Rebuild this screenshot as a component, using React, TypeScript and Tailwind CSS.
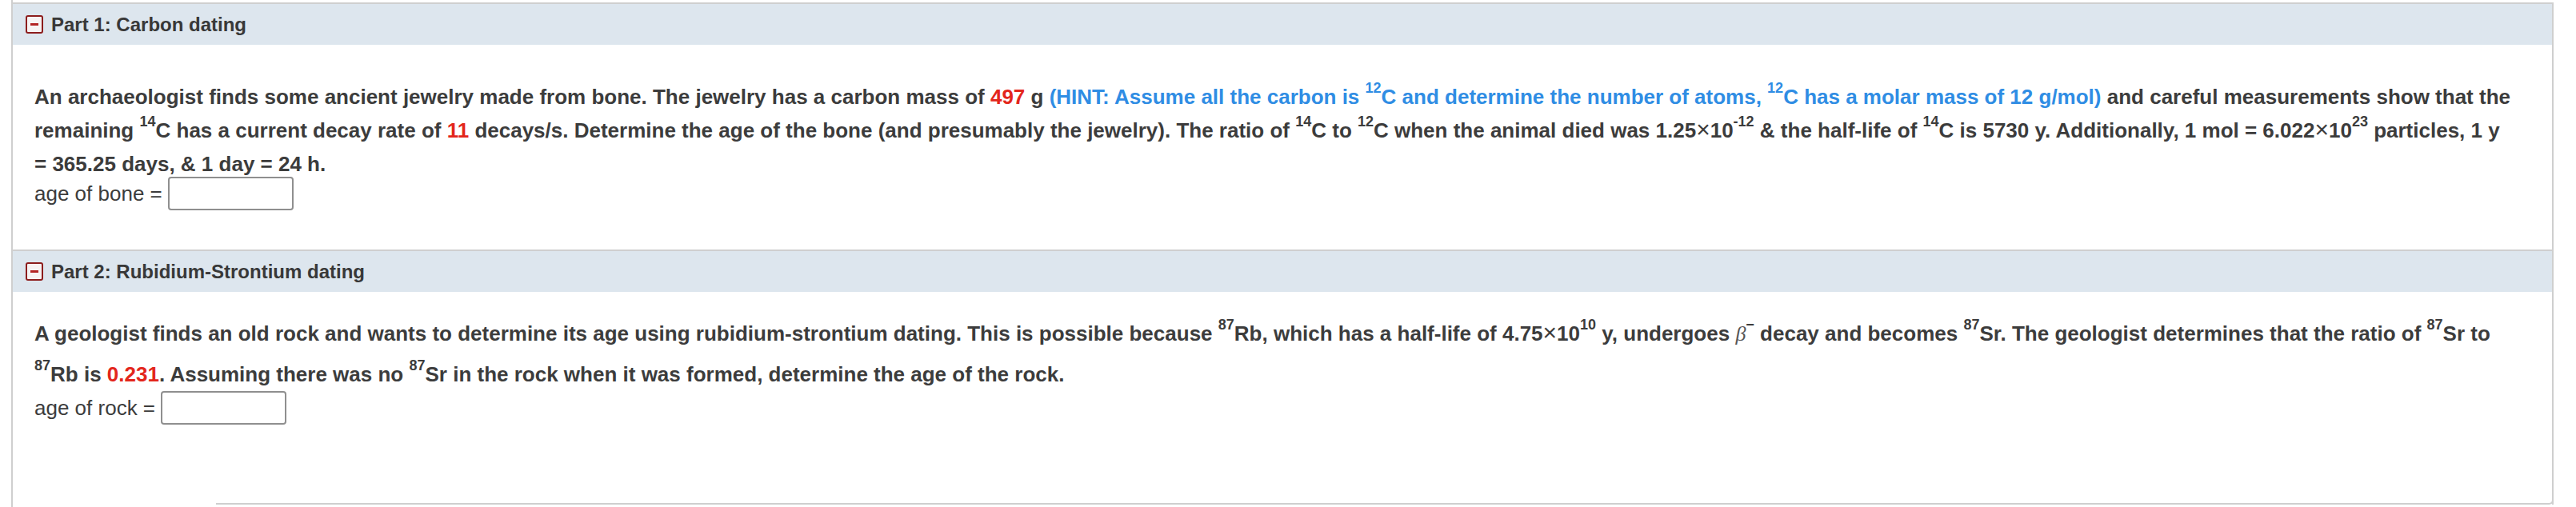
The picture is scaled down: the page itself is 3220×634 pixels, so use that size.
import React from 'react';

const Sup: React.FC<{ children: React.ReactNode }> = ({ children }) => (
  <sup className="text-[18px] top-[-0.78em]">{children}</sup>
);

const Red: React.FC<{ children: React.ReactNode }> = ({ children }) => (
  <span className="text-[#e3261c]">{children}</span>
);

const Times: React.FC = () => <span className="text-[30px] leading-none font-normal">×</span>;

const MinusIcon: React.FC = () => (
  <span className="flex h-[23px] w-[22px] items-center justify-center rounded-[3px] border-2 border-[#8c1d1d] bg-[#f7f3f3]">
    <span className="h-[3px] w-[10px] bg-[#b32424]" />
  </span>
);

const SectionHeader: React.FC<{ title: string }> = ({ title }) => (
  <div className="flex h-[51px] items-center gap-[10px] bg-[#dde6ee] pl-[16px]">
    <MinusIcon />
    <span className="text-[24px] font-bold text-[#383838]">{title}</span>
  </div>
);

const AnswerRow: React.FC<{ label: string; className?: string }> = ({ label, className }) => (
  <div className={`flex items-center gap-[7px] font-normal ${className ?? ''}`}>
    <span>{label}</span>
    <span className="h-[42px] w-[157px] rounded-[4px] border-2 border-[#8f8f8f] bg-white" />
  </div>
);

export default function App() {
  return (
    <div className="flex h-[634px] w-[3220px] overflow-hidden bg-white font-['Liberation_Sans',Arial,sans-serif] text-[26px] text-[#3c3c3c]">
      <div className="ml-[14px] w-[2px] shrink-0 bg-[#cfcfcf]" />
      <div className="mt-[3px] flex h-[628px] w-[3176px] flex-col border-t-2 border-r-2 border-[#cfcfcf]">
        <SectionHeader title="Part 1: Carbon dating" />
        <div className="h-[256px] pt-[44px] pl-[27px] pr-[49px]">
          <p className="font-bold leading-[42px]">
            An archaeologist finds some ancient jewelry made from bone. The jewelry has a carbon mass of <Red>497</Red> g{' '}
            <span className="text-[#2f8de4]">
              (HINT: Assume all the carbon is <Sup>12</Sup>C and determine the number of atoms, <Sup>12</Sup>C has a molar mass of 12 g/mol)
            </span>{' '}
            and careful measurements show that the remaining <Sup>14</Sup>C has a current decay rate of <Red>11</Red> decays/s.
            Determine the age of the bone (and presumably the jewelry). The ratio of <Sup>14</Sup>C to <Sup>12</Sup>C when the animal
            died was 1.25<Times />10<Sup>-12</Sup> &amp; the half-life of <Sup>14</Sup>C is 5730 y. Additionally, 1 mol = 6.022<Times />10
            <Sup>23</Sup> particles, 1 y = 365.25 days, &amp; 1 day = 24 h.
          </p>
          <AnswerRow label="age of bone =" className="-mt-[5px]" />
        </div>
        <div className="border-t-2 border-[#cfcfcf]">
          <SectionHeader title="Part 2: Rubidium-Strontium dating" />
        </div>
        <div className="flex-1 pt-[27px] pl-[27px] pr-[49px]">
          <p className="font-bold leading-[50px]">
            A geologist finds an old rock and wants to determine its age using rubidium-strontium dating. This is possible because{' '}
            <Sup>87</Sup>Rb, which has a half-life of 4.75<Times />10<Sup>10</Sup> y, undergoes{' '}
            <span className="font-['Liberation_Serif',serif] font-normal italic text-[#555]">β</span>
            <Sup>−</Sup> decay and becomes <Sup>87</Sup>Sr. The geologist determines that the ratio of <Sup>87</Sup>Sr to{' '}
            <Sup>87</Sup>Rb is <Red>0.231</Red>. Assuming there was no <Sup>87</Sup>Sr in the rock when it was formed, determine the
            age of the rock.
          </p>
          <AnswerRow label="age of rock =" className="-mt-[4px]" />
        </div>
        <div className="flex h-[6px]">
          <div className="w-[254px]" />
          <div className="-mr-[2px] flex-1 rounded-br-[8px] border-r-2 border-b-2 border-[#cfcfcf]" />
        </div>
      </div>
    </div>
  );
}
